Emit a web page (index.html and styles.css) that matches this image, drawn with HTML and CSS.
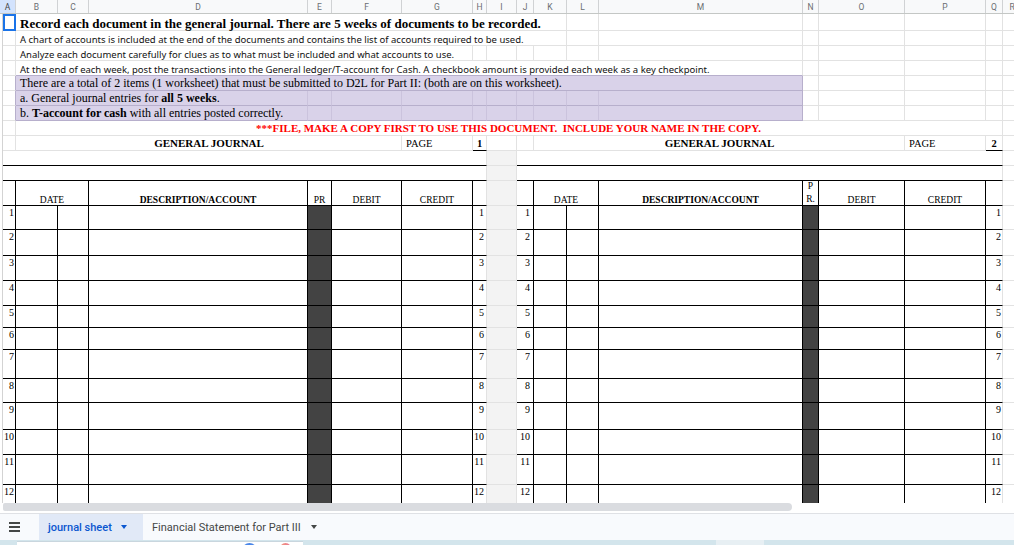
FILE: index.html
```html
<!DOCTYPE html>
<html>
<head>
<meta charset="utf-8">
<title>journal sheet</title>
<link rel="stylesheet" href="styles.css">
</head>
<body>
<div class="colhead">
  <div class="on">A</div><div>B</div><div>C</div><div>D</div><div>E</div><div>F</div><div>G</div><div>H</div><div>I</div><div>J</div><div>K</div><div>L</div><div>M</div><div>N</div><div>O</div><div>P</div><div>Q</div><div>R</div>
</div>
<div class="sheet">
  <!-- row 1 -->
  <div class="sel"></div>
  <div class="s10 txt t1"><span>Record each document in the general journal. There are 5 weeks of documents to be recorded.</span></div>
  <div></div><div></div><div></div><div></div><div></div><div></div><div></div>
  <!-- row 2 -->
  <div></div>
  <div class="s10 txt t2"><span>A chart of accounts is included at the end of the documents and contains the list of accounts required to be used.</span></div>
  <div></div><div></div><div></div><div></div><div></div><div></div><div></div>
  <!-- row 3 -->
  <div></div>
  <div class="s6 txt t2"><span>Analyze each document carefully for clues as to what must be included and what accounts to use.</span></div>
  <div></div><div></div><div></div><div></div><div></div><div></div><div></div><div></div><div></div><div></div><div></div>
  <!-- row 4 -->
  <div></div>
  <div class="s12 txt t2 pb"><span>At the end of each week, post the transactions into the General ledger/T-account for Cash. A checkbook amount is provided each week as a key checkpoint.</span></div>
  <div></div><div></div><div></div><div></div><div></div>
  <!-- row 5 -->
  <div class="pl"></div>
  <div class="s12 txt t3 pu pe"><span>There are a total of 2 items (1 worksheet) that must be submitted to D2L for Part II: (both are on this worksheet).</span></div>
  <div></div><div></div><div></div><div></div><div></div>
  <!-- row 6 -->
  <div class="pl"></div>
  <div class="s3 txt t3 pu"><span>a. General journal entries for <b>all 5 weeks</b>.</span></div>
  <div class="pu"></div><div class="pu"></div><div class="pu"></div><div class="pu"></div><div class="pu"></div><div class="pu"></div><div class="pu"></div><div class="pu"></div><div class="pu pe"></div>
  <div></div><div></div><div></div><div></div><div></div>
  <!-- row 7 -->
  <div class="pl"></div>
  <div class="s3 txt t3 pu"><span>b. <b>T-account for cash</b> with all entries posted correctly.</span></div>
  <div class="pu"></div><div class="pu"></div><div class="pu"></div><div class="pu"></div><div class="pu"></div><div class="pu"></div><div class="pu"></div><div class="pu"></div><div class="pu pe"></div>
  <div></div><div></div><div></div><div></div><div></div>
  <!-- row 8 -->
  <div></div>
  <div class="s16 txt red"><span>***FILE, MAKE A COPY FIRST TO USE THIS DOCUMENT.&nbsp; INCLUDE YOUR NAME IN THE COPY.</span></div>
  <div></div>
  <!-- row 9 -->
  <div></div>
  <div class="s5 txt gj"><span>GENERAL JOURNAL</span></div>
  <div class="txt page"><span>PAGE</span></div>
  <div class="txt pnum b"><span>1</span></div>
  <div></div>
  <div></div>
  <div class="s5 txt gj"><span>GENERAL JOURNAL</span></div>
  <div class="txt page"><span>PAGE</span></div>
  <div class="txt pnum b"><span>2</span></div>
  <div></div>
  <!-- row 10 -->
  <div class="s8 b"></div><div class="gap"></div><div class="s8 b"></div><div></div>
  <!-- row 11 -->
  <div class="s8 b"></div><div class="gap"></div><div class="s8 b"></div><div></div>
  <!-- row 12 header -->
  <div class="r b"></div>
  <div class="s2 hd r b">DATE</div>
  <div class="hd r b"><b>DESCRIPTION/ACCOUNT</b></div>
  <div class="hd r b">PR</div>
  <div class="hd r b">DEBIT</div>
  <div class="hd r b">CREDIT</div>
  <div class="b"></div>
  <div class="gap"></div>
  <div class="r b"></div>
  <div class="s2 hd r b">DATE</div>
  <div class="hd r b"><b>DESCRIPTION/ACCOUNT</b></div>
  <div class="hd pr2 r b"><span>P</span><span>R.</span></div>
  <div class="hd r b">DEBIT</div>
  <div class="hd r b">CREDIT</div>
  <div class="b"></div>
  <div></div>

  <!-- data rows -->
  <div class="num na r b">1</div><div class="r b"></div><div class="r b"></div><div class="r b"></div><div class="dk r b"></div><div class="r b"></div><div class="r b"></div><div class="num nh b">1</div><div class="gap"></div><div class="num nj r b">1</div><div class="r b"></div><div class="r b"></div><div class="r b"></div><div class="dk r b"></div><div class="r b"></div><div class="r b"></div><div class="num nq b">1</div><div></div>
  <div class="num na r b">2</div><div class="r b"></div><div class="r b"></div><div class="r b"></div><div class="dk r b"></div><div class="r b"></div><div class="r b"></div><div class="num nh b">2</div><div class="gap"></div><div class="num nj r b">2</div><div class="r b"></div><div class="r b"></div><div class="r b"></div><div class="dk r b"></div><div class="r b"></div><div class="r b"></div><div class="num nq b">2</div><div></div>
  <div class="num na r b">3</div><div class="r b"></div><div class="r b"></div><div class="r b"></div><div class="dk r b"></div><div class="r b"></div><div class="r b"></div><div class="num nh b">3</div><div class="gap"></div><div class="num nj r b">3</div><div class="r b"></div><div class="r b"></div><div class="r b"></div><div class="dk r b"></div><div class="r b"></div><div class="r b"></div><div class="num nq b">3</div><div></div>
  <div class="num na r b">4</div><div class="r b"></div><div class="r b"></div><div class="r b"></div><div class="dk r b"></div><div class="r b"></div><div class="r b"></div><div class="num nh b">4</div><div class="gap"></div><div class="num nj r b">4</div><div class="r b"></div><div class="r b"></div><div class="r b"></div><div class="dk r b"></div><div class="r b"></div><div class="r b"></div><div class="num nq b">4</div><div></div>
  <div class="num na r b">5</div><div class="r b"></div><div class="r b"></div><div class="r b"></div><div class="dk r b"></div><div class="r b"></div><div class="r b"></div><div class="num nh b">5</div><div class="gap"></div><div class="num nj r b">5</div><div class="r b"></div><div class="r b"></div><div class="r b"></div><div class="dk r b"></div><div class="r b"></div><div class="r b"></div><div class="num nq b">5</div><div></div>
  <div class="num na r b">6</div><div class="r b"></div><div class="r b"></div><div class="r b"></div><div class="dk r b"></div><div class="r b"></div><div class="r b"></div><div class="num nh b">6</div><div class="gap"></div><div class="num nj r b">6</div><div class="r b"></div><div class="r b"></div><div class="r b"></div><div class="dk r b"></div><div class="r b"></div><div class="r b"></div><div class="num nq b">6</div><div></div>
  <div class="num na r b">7</div><div class="r b"></div><div class="r b"></div><div class="r b"></div><div class="dk r b"></div><div class="r b"></div><div class="r b"></div><div class="num nh b">7</div><div class="gap"></div><div class="num nj r b">7</div><div class="r b"></div><div class="r b"></div><div class="r b"></div><div class="dk r b"></div><div class="r b"></div><div class="r b"></div><div class="num nq b">7</div><div></div>
  <div class="num na r b">8</div><div class="r b"></div><div class="r b"></div><div class="r b"></div><div class="dk r b"></div><div class="r b"></div><div class="r b"></div><div class="num nh b">8</div><div class="gap"></div><div class="num nj r b">8</div><div class="r b"></div><div class="r b"></div><div class="r b"></div><div class="dk r b"></div><div class="r b"></div><div class="r b"></div><div class="num nq b">8</div><div></div>
  <div class="num na r b">9</div><div class="r b"></div><div class="r b"></div><div class="r b"></div><div class="dk r b"></div><div class="r b"></div><div class="r b"></div><div class="num nh b">9</div><div class="gap"></div><div class="num nj r b">9</div><div class="r b"></div><div class="r b"></div><div class="r b"></div><div class="dk r b"></div><div class="r b"></div><div class="r b"></div><div class="num nq b">9</div><div></div>
  <div class="num na r b">10</div><div class="r b"></div><div class="r b"></div><div class="r b"></div><div class="dk r b"></div><div class="r b"></div><div class="r b"></div><div class="num nh b">10</div><div class="gap"></div><div class="num nj r b">10</div><div class="r b"></div><div class="r b"></div><div class="r b"></div><div class="dk r b"></div><div class="r b"></div><div class="r b"></div><div class="num nq b">10</div><div></div>
  <div class="num na r b">11</div><div class="r b"></div><div class="r b"></div><div class="r b"></div><div class="dk r b"></div><div class="r b"></div><div class="r b"></div><div class="num nh b">11</div><div class="gap"></div><div class="num nj r b">11</div><div class="r b"></div><div class="r b"></div><div class="r b"></div><div class="dk r b"></div><div class="r b"></div><div class="r b"></div><div class="num nq b">11</div><div></div>
  <div class="num na r b">12</div><div class="r b"></div><div class="r b"></div><div class="r b"></div><div class="dk r b"></div><div class="r b"></div><div class="r b"></div><div class="num nh b">12</div><div class="gap"></div><div class="num nj r b">12</div><div class="r b"></div><div class="r b"></div><div class="r b"></div><div class="dk r b"></div><div class="r b"></div><div class="r b"></div><div class="num nq b">12</div><div></div>
</div>
<div class="scroll"><div class="thumb"></div></div>
<div class="tabs">
  <div class="menu"><span></span><span></span><span></span></div>
  <div class="tab on"><span>journal sheet</span><span class="tri"></span></div>
  <div class="tab"><span>Financial Statement for Part III</span><span class="tri"></span></div>
</div>
<div class="dock">
  <div class="panel"><span class="dot blue"></span><span class="dot pink"></span></div>
  <div class="light"></div>
</div>
</body>
</html>
```
FILE: styles.css
```css
* { box-sizing: border-box; }
html, body { margin: 0; padding: 0; overflow: hidden; }
body {
  width: 1014px;
  height: 545px;
  background: #fff;
  font-family: "Liberation Serif", serif;
  color: #000;
}

/* column letters */
.colhead {
  display: grid;
  grid-template-columns: 16px 42px 31px 219px 24px 70px 71px 14px 30px 17px 33px 32px 204px 16px 86px 81px 17px 19px;
  height: 14px;
  background: #f8f9fa;
  border-bottom: 1px solid #c4c7c5;
  font-family: Roboto, "Liberation Sans", sans-serif;
  font-size: 8.5px;
  color: #6b6e72;
}
.colhead > div {
  border-right: 1px solid #d0d2d4;
  display: flex;
  align-items: center;
  justify-content: center;
}
.colhead .on { background: #d3e3fd; color: #444; }

/* sheet grid */
.sheet {
  display: grid;
  margin-left: 2px;
  border-left: 1px solid #d3d3d3;
  height: 489px;
  overflow: hidden;
  grid-template-columns: 13px 42px 31px 219px 24px 70px 71px 14px 30px 17px 33px 32px 204px 16px 86px 81px 17px 19px;
  grid-template-rows: 17px repeat(10, 15px) 25px 24px 26px 25px 25px 22px 22px 29px 24px 27px 25px 30px 30px;
}
.sheet > * {
  border-right: 1px solid #e2e2e2;
  border-bottom: 1px solid #e2e2e2;
  white-space: nowrap;
  min-width: 0;
}
.s2 { grid-column: span 2; }
.s3 { grid-column: span 3; }
.s5 { grid-column: span 5; }
.s6 { grid-column: span 6; }
.s8 { grid-column: span 8; }
.s10 { grid-column: span 10; }
.s12 { grid-column: span 12; }
.s16 { grid-column: span 16; }

.r { border-right-color: #000; }
.b { border-bottom-color: #000; }

.sel { outline: 2px solid #1a73e8; outline-offset: -2px; }

.txt {
  display: flex;
  align-items: flex-end;
  padding: 0 3px 0 4px;
  line-height: 1;
}
.t1 { font-weight: bold; font-size: 13px; }
.t2 { font-family: "Noto Sans", "Liberation Sans", sans-serif; font-size: 9.5px; padding-bottom: 1px; color: #111; }
.t3 { font-size: 12px; padding-bottom: 1px; }

/* purple block */
.pu { background: #d9d2e9; border-right-color: #cbc3dd; border-bottom-color: #b7afcc; }
.pe { border-right-color: #b7afcc; }
.pb { border-bottom-color: #b7afcc; }
.pl { border-right-color: #b7afcc; }

.red {
  justify-content: center;
  padding-right: 5px;
  color: #f00;
  font-weight: bold;
  font-size: 11px;
  padding-bottom: 1px;
}
.gj { justify-content: center; font-weight: bold; font-size: 11px; padding-bottom: 1px; }
.page { font-size: 10.5px; padding-bottom: 1px; }
.pnum { justify-content: center; font-weight: bold; font-size: 10.5px; padding: 0 0 1px 0; }

.gap { background: #f3f3f3; }

.hd {
  display: flex;
  align-items: flex-end;
  justify-content: center;
  font-size: 9.5px;
  line-height: 1;
}
.pr2 { flex-direction: column; align-items: center; justify-content: flex-end; line-height: 12.5px; }

.dk { background: #434343; }

.num {
  font-size: 10px;
  line-height: 11px;
  padding-top: 1px;
  text-align: right;
}
.na { padding-right: 1px; }
.nh { padding-right: 2px; }
.nj { padding-right: 3px; }
.nq { padding-right: 1px; }

/* horizontal scrollbar */
.scroll {
  height: 10px;
  padding: 0 0 0 3px;
}
.thumb {
  width: 789px;
  height: 8px;
  background: #dadce0;
  border-radius: 2px 4px 4px 2px;
}

/* sheet tabs */
.tabs {
  display: flex;
  height: 27px;
  background: #f8fafd;
  border-top: 1px solid #dfe1e5;
  font-family: Roboto, "Liberation Sans", sans-serif;
  font-size: 11px;
  color: #444746;
}
.menu {
  width: 39px;
  display: flex;
  flex-direction: column;
  justify-content: center;
  gap: 2.6px;
  padding-left: 9px;
}
.menu span { display: block; width: 11px; height: 1.4px; background: #444746; }
.tab {
  display: flex;
  align-items: center;
  padding: 0 10px 0 9px;
}
.tab.on { width: 104px; background: #e1e9f7; color: #0b57d0; font-weight: 500; }
.tri {
  margin-left: 10px;
  width: 0;
  height: 0;
  border-left: 3.5px solid transparent;
  border-right: 3.5px solid transparent;
  border-top: 4px solid currentColor;
}
.tab.on .tri { margin-left: 9px; }

/* bottom dock strip */
.dock {
  display: flex;
  height: 5px;
  background: #d3e5ec;
  overflow: hidden;
  padding-left: 17px;
  gap: 413px;
}
.panel {
  width: 286px;
  height: 5px;
  margin-top: 1px;
  background: #fff;
  border-top: 1px solid #c9d6de;
  display: flex;
  padding-left: 225px;
  gap: 22px;
}
.dot { display: block; width: 15px; height: 15px; border-radius: 50%; margin-top: 1px; }
.dot.blue { background: #4a86e8; }
.dot.pink { background: linear-gradient(90deg, #f29b76, #e8739a); width: 13px; }
.light { width: 48px; height: 5px; background: #e7eff3; }
```
